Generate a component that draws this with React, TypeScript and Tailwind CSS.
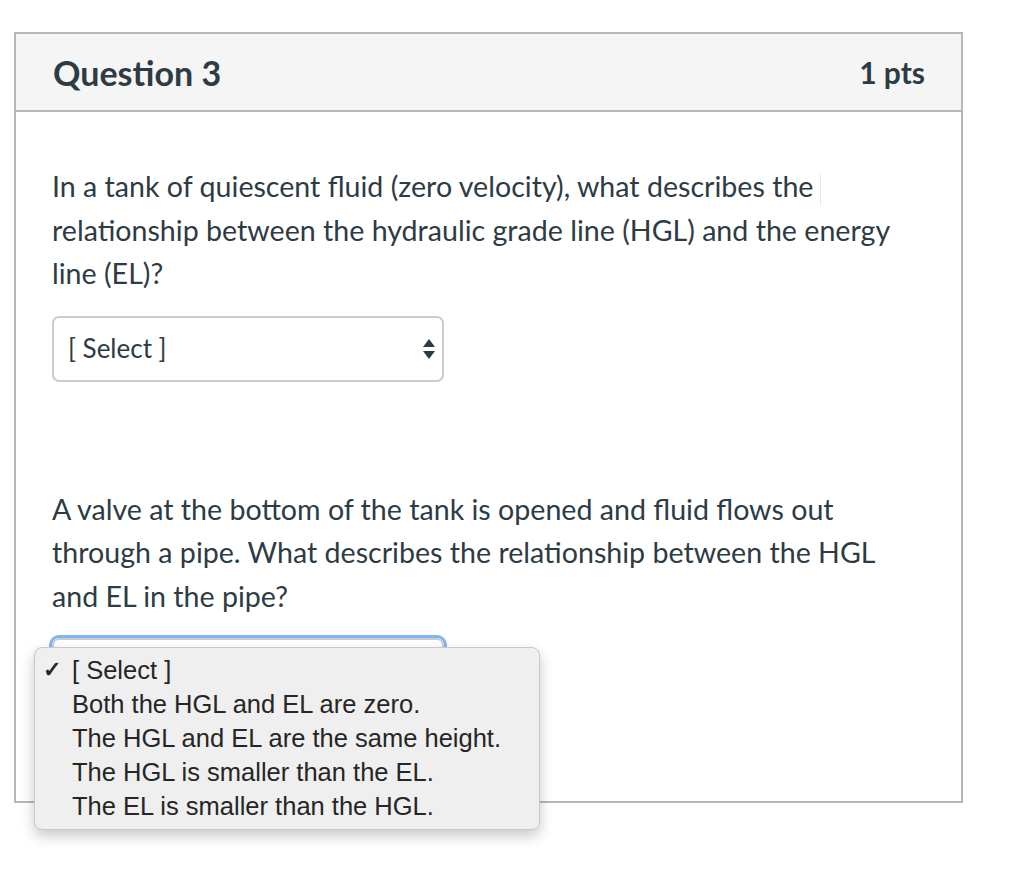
import React from "react";

export default function App() {
  return (
    <div className="relative w-[1024px] h-[888px] bg-white" style={{ fontFamily: "Lato, 'Open Sans', sans-serif" }}>
      <div className="pt-[32px] pl-[14px]">
        <div className="w-[949px] h-[771px] border-2 border-[#b7b7b7] flex flex-col">
          <div className="h-[78px] bg-[#f5f5f5] border-b-2 border-[#b7b7b7] flex items-center justify-between pl-[37px] pr-[36px] text-[#2d3b45]">
            <div className="text-[34px] font-bold tracking-[0px]">Question 3</div>
            <div className="text-[30px] font-bold">1 pts</div>
          </div>
          <div className="pt-[53px] pl-[36px] pr-[36px] text-[#2d3b45]">
            <p className="text-[28.6px] leading-[43.5px] whitespace-nowrap">
              In a tank of quiescent fluid (zero velocity), what describes the
              <span className="inline-block w-px h-[33px] bg-[#e6eaee] align-middle ml-[7px]" />
              <br />
              relationship between the hydraulic grade line (HGL) and the energy
              <br />
              line (EL)?
            </p>
            <div className="mt-[20px] w-[392px] h-[66px] border-2 border-[#c7cdd1] rounded-[7px] flex items-center justify-between pl-[14px] pr-[6px]">
              <span className="text-[26px]">[ Select ]</span>
              <svg width="14" height="22" viewBox="0 0 14 22">
                <path d="M7 1 L13 9 L1 9 Z" fill="#2d3b45" />
                <path d="M7 21 L13 13 L1 13 Z" fill="#2d3b45" />
              </svg>
            </div>
            <p className="mt-[106px] text-[28.6px] leading-[43.5px] whitespace-nowrap">
              A valve at the bottom of the tank is opened and fluid flows out
              <br />
              through a pipe. What describes the relationship between the HGL
              <br />
              and EL in the pipe?
            </p>
            <div className="mt-[20px] w-[392px] h-[66px] border-2 border-[#c7cdd1] rounded-[7px] shadow-[0_0_0_3px_#7fb6f2]" />
          </div>
        </div>
      </div>
      <div
        className="absolute left-[34px] top-[647px] w-[506px] h-[183px] bg-[#efefef] border border-[#c9c9c9] rounded-[8px] shadow-[0_6px_14px_rgba(0,0,0,0.22)] pt-[5px] pl-[8px] text-[#262626] text-[25.5px] leading-[34px]"
        style={{ fontFamily: "'Liberation Sans', Arial, sans-serif" }}
      >
        <div className="flex"><span className="w-[29px] text-[22px] font-bold">✓</span><span>[ Select ]</span></div>
        <div className="pl-[29px]">Both the HGL and EL are zero.</div>
        <div className="pl-[29px]">The HGL and EL are the same height.</div>
        <div className="pl-[29px]">The HGL is smaller than the EL.</div>
        <div className="pl-[29px]">The EL is smaller than the HGL.</div>
      </div>
    </div>
  );
}
